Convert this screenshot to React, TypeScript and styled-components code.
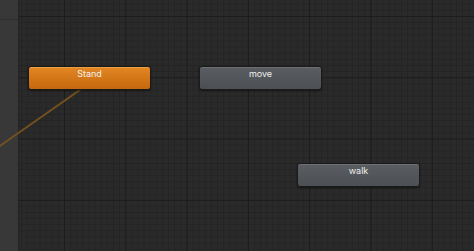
import React from "react";
import styled, { createGlobalStyle } from "styled-components";

const GlobalStyle = createGlobalStyle`
  html, body {
    margin: 0;
    padding: 0;
    background: #282828;
    overflow: hidden;
  }
`;

const MAJOR = 61.3;
const MINOR = MAJOR / 10;

type NodeKind = "default" | "normal";

interface StateNode {
  name: string;
  x: number;
  y: number;
  kind: NodeKind;
}

// positions are relative to the graph canvas
const states: StateNode[] = [
  { name: "Stand", x: 9, y: 66, kind: "default" },
  { name: "move", x: 180, y: 66, kind: "normal" },
  { name: "walk", x: 278, y: 163, kind: "normal" },
];

const App = () => {
  return (
    <>
      <GlobalStyle />
      <Window>
        <Sidebar>
          <SidebarHeader />
        </Sidebar>
        <Graph>
          {states.map((s) => (
            <Node key={s.name} $kind={s.kind} style={{ left: s.x, top: s.y }}>
              {s.name}
            </Node>
          ))}
        </Graph>
        <Transitions width="474" height="251">
          <line x1="97" y1="78" x2="-3" y2="148" stroke="#74521f" strokeWidth="2" />
        </Transitions>
      </Window>
    </>
  );
};

const Window = styled.div`
  position: relative;
  display: flex;
  width: 474px;
  height: 251px;
  font-family: Inter, "Liberation Sans", sans-serif;
`;

const Sidebar = styled.div`
  width: 18px;
  flex-shrink: 0;
  background: #383838;
  border-right: 1px solid #232323;
`;

const SidebarHeader = styled.div`
  height: 19px;
  border-bottom: 1px solid #2e2e2e;
`;

const Graph = styled.div`
  position: relative;
  flex: 1;
  background-color: #2a2a2a;
  background-image:
    linear-gradient(to right, #1c1c1c 1px, transparent 1px),
    linear-gradient(to bottom, #1c1c1c 1px, transparent 1px),
    linear-gradient(to right, #242424 1px, transparent 1px),
    linear-gradient(to bottom, #242424 1px, transparent 1px);
  background-size:
    ${MAJOR}px ${MAJOR}px,
    ${MAJOR}px ${MAJOR}px,
    ${MINOR}px ${MINOR}px,
    ${MINOR}px ${MINOR}px;
  background-position: 45px 16px, 45px 16px, 45px 16px, 45px 16px;
`;

const Transitions = styled.svg`
  position: absolute;
  left: 0;
  top: 0;
  pointer-events: none;
  z-index: 1;
`;

const Node = styled.div<{ $kind: NodeKind }>`
  position: absolute;
  z-index: 2;
  box-sizing: border-box;
  width: 123px;
  height: 24px;
  padding-top: 1px;
  border-radius: 3px;
  border: 1px solid #1b1b1b;
  background: ${(p) =>
    p.$kind === "default"
      ? "linear-gradient(to bottom, #e38824, #c5670c)"
      : "linear-gradient(to bottom, #5a5d61, #4c4f53)"};
  box-shadow: 0 1px 2px rgba(0, 0, 0, 0.5),
    inset 0 1px 0 ${(p) => (p.$kind === "default" ? "rgba(255,200,130,0.35)" : "rgba(255,255,255,0.12)")};
  color: #f0f0f0;
  font-size: 9px;
  line-height: 11px;
  text-align: center;
`;

export default App;
